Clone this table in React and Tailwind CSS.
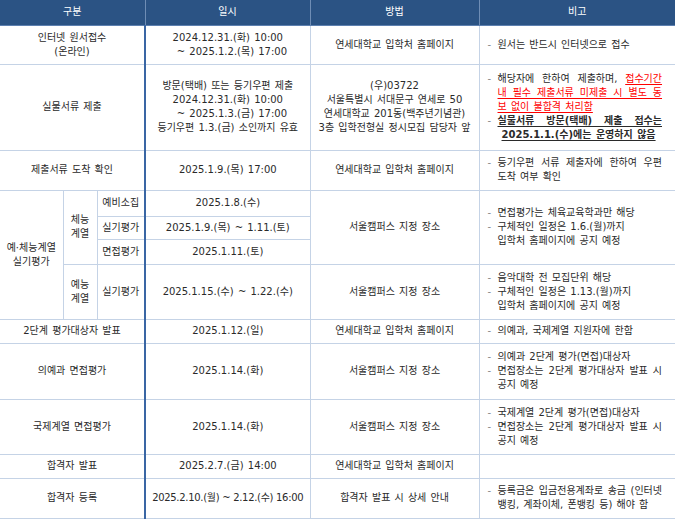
import React from 'react';

const cell = 'border border-[#c5d3e6] px-1 text-center align-middle';
const first = 'border border-[#c5d3e6] border-l-0 px-1 text-center align-middle';
const date = 'border border-[#c5d3e6] border-l-2 border-l-[#3a66a4] px-0 text-center align-middle whitespace-nowrap';
const note = 'border border-[#c5d3e6] border-l-[#9cb7dc] border-r-0 p-0 align-middle';

function Red({ children }) {
  return <span className="text-[#ff0000] underline underline-offset-2">{children}</span>;
}

// each line: { t, j } -> j = justified line
function Note({ items }) {
  return (
    <div className="flex flex-col pl-[8px] pr-[13px] text-left">
      {items.map((lines, i) => (
        <div key={i} className="flex">
          <span className="w-[10px] shrink-0 text-[#888]">-</span>
          <div className="min-w-0 flex-1">
            {lines.map((ln, k) => (
              <div
                key={k}
                className={ln.j ? 'whitespace-nowrap text-justify [text-align-last:justify]' : 'whitespace-nowrap'}
              >
                {ln.t}
              </div>
            ))}
          </div>
        </div>
      ))}
    </div>
  );
}

export default function App() {
  return (
    <div className="w-[675px] bg-white font-['DejaVu_Sans','Noto_Sans_CJK_KR',sans-serif] text-[10px] leading-[14px] text-[#2a2a2a] [word-spacing:1px]">
      <table className="w-[675px] table-fixed border-collapse">
        <colgroup>
          <col className="w-[63px]" />
          <col className="w-[34px]" />
          <col className="w-[48px]" />
          <col className="w-[165px]" />
          <col className="w-[169px]" />
          <col className="w-[196px]" />
        </colgroup>
        <thead>
          <tr className="h-[25px] bg-[#2b5384] text-white">
            <th colSpan={3} className="border-r border-b border-[#6f8db5] border-b-[#5d80b0] font-normal">구분</th>
            <th className="border-r border-b border-[#6f8db5] border-b-[#5d80b0] font-normal">일시</th>
            <th className="border-r border-b border-[#6f8db5] border-b-[#5d80b0] font-normal">방법</th>
            <th className="border-b border-b-[#5d80b0] font-normal">비고</th>
          </tr>
        </thead>
        <tbody>
          <tr className="h-[39px]">
            <td colSpan={3} className={first}>
              인터넷 원서접수
              <br />
              (온라인)
            </td>
            <td className={date}>
              2024.12.31.(화) 10:00
              <br />
              &nbsp;&nbsp;~ 2025.1.2.(목) 17:00
            </td>
            <td className={cell}>연세대학교 입학처 홈페이지</td>
            <td className={note}>
              <Note items={[[{ t: '원서는 반드시 인터넷으로 접수' }]]} />
            </td>
          </tr>

          <tr className="h-[86px]">
            <td colSpan={3} className={first}>실물서류 제출</td>
            <td className={date}>
              방문(택배) 또는 등기우편 제출
              <br />
              2024.12.31.(화) 10:00
              <br />
              &nbsp;&nbsp;~ 2025.1.3.(금) 17:00
              <br />
              등기우편 1.3.(금) 소인까지 유효
            </td>
            <td className={cell + ' whitespace-nowrap px-0'}>
              (우)03722
              <br />
              서울특별시 서대문구 연세로 50
              <br />
              연세대학교 201동(백주년기념관)
              <br />
              3층 입학전형실 정시모집 담당자 앞
            </td>
            <td className={note}>
              <Note
                items={[
                  [
                    { t: <>해당자에 한하여 제출하며, <Red>접수기간</Red></>, j: true },
                    { t: <Red>내 필수 제출서류 미제출 시 별도 동</Red>, j: true },
                    { t: <Red>보 없이 불합격 처리함</Red> },
                  ],
                  [
                    { t: <span className="font-bold underline underline-offset-2">실물서류 방문(택배) 제출 접수는</span>, j: true },
                    { t: <span className="pl-[4px] font-bold underline underline-offset-2">2025.1.1.(수)에는 운영하지 않음</span> },
                  ],
                ]}
              />
            </td>
          </tr>

          <tr className="h-[40px]">
            <td colSpan={3} className={first}>제출서류 도착 확인</td>
            <td className={date}>2025.1.9.(목) 17:00</td>
            <td className={cell}>연세대학교 입학처 홈페이지</td>
            <td className={note}>
              <Note items={[[{ t: '등기우편 서류 제출자에 한하여 우편', j: true }, { t: '도착 여부 확인' }]]} />
            </td>
          </tr>

          <tr className="h-[26px]">
            <td rowSpan={4} className={first}>
              예·체능계열
              <br />
              실기평가
            </td>
            <td rowSpan={3} className={cell + ' px-0'}>
              체능
              <br />
              계열
            </td>
            <td className={cell + ' px-0'}>예비소집</td>
            <td className={date}>2025.1.8.(수)</td>
            <td rowSpan={3} className={cell}>서울캠퍼스 지정 장소</td>
            <td rowSpan={3} className={note}>
              <Note
                items={[
                  [{ t: '면접평가는 체육교육학과만 해당' }],
                  [{ t: '구체적인 일정은 1.6.(월)까지' }, { t: '입학처 홈페이지에 공지 예정' }],
                ]}
              />
            </td>
          </tr>
          <tr className="h-[23px]">
            <td className={cell + ' px-0'}>실기평가</td>
            <td className={date}>2025.1.9.(목) ~ 1.11.(토)</td>
          </tr>
          <tr className="h-[25px]">
            <td className={cell + ' px-0'}>면접평가</td>
            <td className={date}>2025.1.11.(토)</td>
          </tr>
          <tr className="h-[55px]">
            <td className={cell + ' px-0'}>
              예능
              <br />
              계열
            </td>
            <td className={cell + ' px-0'}>실기평가</td>
            <td className={date}>2025.1.15.(수) ~ 1.22.(수)</td>
            <td className={cell}>서울캠퍼스 지정 장소</td>
            <td className={note}>
              <Note
                items={[
                  [{ t: '음악대학 전 모집단위 해당' }],
                  [{ t: '구체적인 일정은 1.13.(월)까지' }, { t: '입학처 홈페이지에 공지 예정' }],
                ]}
              />
            </td>
          </tr>

          <tr className="h-[24px]">
            <td colSpan={3} className={first}>2단계 평가대상자 발표</td>
            <td className={date}>2025.1.12.(일)</td>
            <td className={cell}>연세대학교 입학처 홈페이지</td>
            <td className={note}>
              <Note items={[[{ t: '의예과, 국제계열 지원자에 한함' }]]} />
            </td>
          </tr>

          <tr className="h-[56px]">
            <td colSpan={3} className={first}>의예과 면접평가</td>
            <td className={date}>2025.1.14.(화)</td>
            <td className={cell}>서울캠퍼스 지정 장소</td>
            <td className={note}>
              <Note
                items={[
                  [{ t: '의예과 2단계 평가(면접)대상자' }],
                  [{ t: '면접장소는 2단계 평가대상자 발표 시', j: true }, { t: '공지 예정' }],
                ]}
              />
            </td>
          </tr>

          <tr className="h-[55px]">
            <td colSpan={3} className={first}>국제계열 면접평가</td>
            <td className={date}>2025.1.14.(화)</td>
            <td className={cell}>서울캠퍼스 지정 장소</td>
            <td className={note}>
              <Note
                items={[
                  [{ t: '국제계열 2단계 평가(면접)대상자' }],
                  [{ t: '면접장소는 2단계 평가대상자 발표 시', j: true }, { t: '공지 예정' }],
                ]}
              />
            </td>
          </tr>

          <tr className="h-[24px]">
            <td colSpan={3} className={first}>합격자 발표</td>
            <td className={date}>2025.2.7.(금) 14:00</td>
            <td className={cell}>연세대학교 입학처 홈페이지</td>
            <td className={note}></td>
          </tr>

          <tr className="h-[40px]">
            <td colSpan={3} className={first}>합격자 등록</td>
            <td className={date + ' tracking-[-0.3px] [word-spacing:0px]'}>2025.2.10.(월) ~ 2.12.(수) 16:00</td>
            <td className={cell}>합격자 발표 시 상세 안내</td>
            <td className={note}>
              <Note
                items={[[{ t: '등록금은 입금전용계좌로 송금 (인터넷', j: true }, { t: '뱅킹, 계좌이체, 폰뱅킹 등) 해야 함' }]]}
              />
            </td>
          </tr>
        </tbody>
      </table>
    </div>
  );
}
